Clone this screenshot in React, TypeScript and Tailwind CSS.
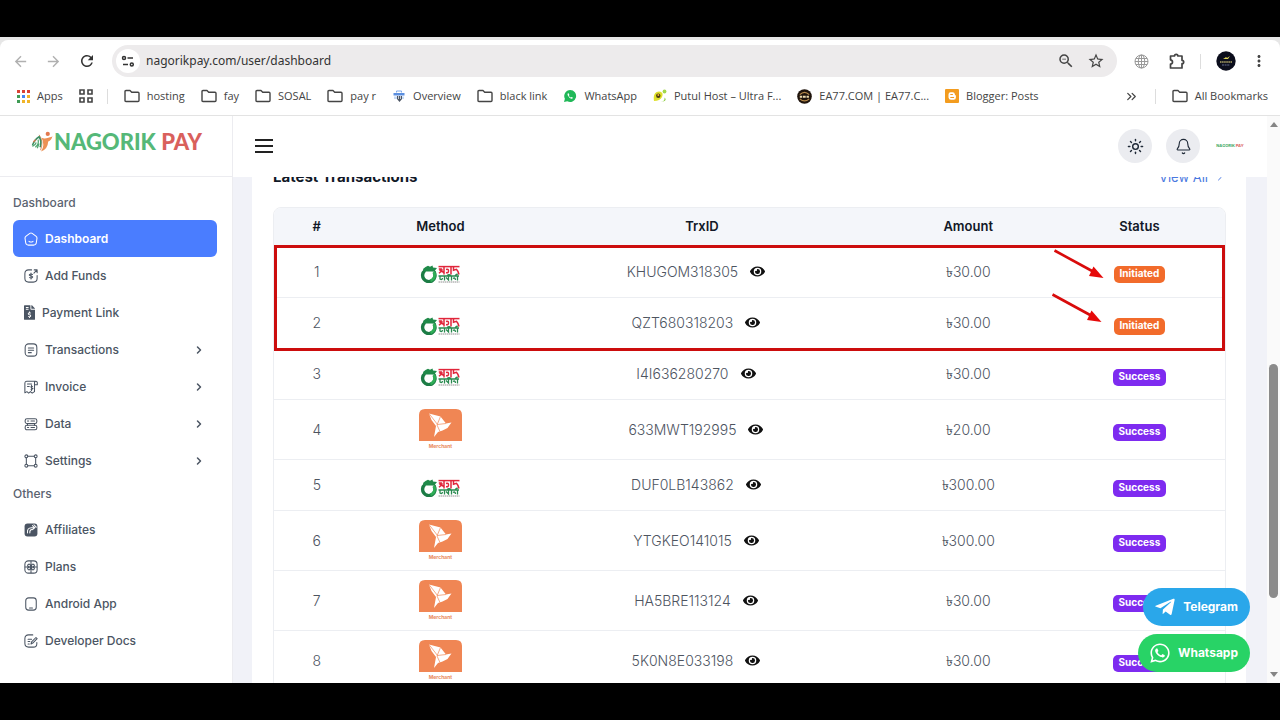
import type { ReactNode } from 'react';
import { Bell, ChevronRight, ChevronsRight, Sun } from 'lucide-react';
import { FaEye, FaFileInvoiceDollar, FaTelegramPlane, FaWhatsapp } from 'react-icons/fa';
import { MdArrowBack, MdArrowForward, MdMoreVert, MdRefresh, MdStarBorder, MdZoomOut } from 'react-icons/md';

interface Transaction {
  id: number;
  method: 'nagad' | 'bkash';
  trx: string;
  amount: string;
  status: 'Initiated' | 'Success';
}

const transactions: Transaction[] = [
  { id: 1, method: 'nagad', trx: 'KHUGOM318305', amount: '৳30.00', status: 'Initiated' },
  { id: 2, method: 'nagad', trx: 'QZT680318203', amount: '৳30.00', status: 'Initiated' },
  { id: 3, method: 'nagad', trx: 'I4I636280270', amount: '৳30.00', status: 'Success' },
  { id: 4, method: 'bkash', trx: '633MWT192995', amount: '৳20.00', status: 'Success' },
  { id: 5, method: 'nagad', trx: 'DUF0LB143862', amount: '৳300.00', status: 'Success' },
  { id: 6, method: 'bkash', trx: 'YTGKEO141015', amount: '৳300.00', status: 'Success' },
  { id: 7, method: 'bkash', trx: 'HA5BRE113124', amount: '৳30.00', status: 'Success' },
  { id: 8, method: 'bkash', trx: '5K0N8E033198', amount: '৳30.00', status: 'Success' },
];

/* ---------- icons ---------- */

function LineIcon({ children }: { children: ReactNode }) {
  return (
    <svg
      viewBox="0 0 24 24"
      className="size-[14px] shrink-0"
      fill="none"
      stroke="currentColor"
      strokeWidth="1.8"
      strokeLinecap="round"
      strokeLinejoin="round"
    >
      {children}
    </svg>
  );
}

const HomeIcon = () => (
  <LineIcon>
    <path d="M10 2.3 3.6 7Q1.4 8.6 1.8 11.2l1.1 7.3Q3.5 22.5 7.5 22.5h9q4 0 4.6-4l1.1-7.3Q22.6 8.6 20.4 7L14 2.3q-2-1.3-4 0Z" />
    <path d="M8.5 16q3.5 2.5 7 0" />
  </LineIcon>
);

const FundsIcon = () => (
  <LineIcon>
    <path d="M13 1.5H8Q1.500 1.500 1.500 8v8q0 6.500 6.500 6.500h8q6.500 0 6.500-6.500v-5" />
    <path d="m17 7 5-5M17.500 1.500h5v5" />
    <path d="M14.500 9.500Q12 7.800 9.800 9.300T12 12t2.200 2.700-4.700.1M12 7v10" />
  </LineIcon>
);

const TransactionsIcon = () => (
  <LineIcon>
    <rect x="2" y="1.5" width="20" height="21" rx="6" />
    <path d="M7.5 8.500h9M7.500 12.500h9M7.500 16.500h5" />
  </LineIcon>
);

const InvoiceIcon = () => (
  <LineIcon>
    <path d="M19 2H5Q1.500 2 1.500 6v16l3.500-2 3 2.500 3-2.500 3 2.500 4-2.500V5q0-3 2.300-3t2.500 2.500V8H18" />
    <path d="M6 7h7M6 11h3M14.500 11Q12 10 12 12t2.500 2-2.500 2.500M13 9v9" />
  </LineIcon>
);

const DataIcon = () => (
  <LineIcon>
    <rect x="2" y="3" width="20" height="8" rx="3" />
    <rect x="2" y="14" width="20" height="8" rx="3" />
    <path d="M6 7h2M12 7h6M6 18h2M12 18h6M6 11v3M18 11v3" />
  </LineIcon>
);

const SettingsIcon = () => (
  <LineIcon>
    <circle cx="4" cy="4" r="2.500" />
    <circle cx="20" cy="4" r="2.500" />
    <circle cx="4" cy="20" r="2.500" />
    <circle cx="20" cy="20" r="2.500" />
    <path d="M6.500 4h11M6.500 20h11M4 6.500v11M20 6.500v11" />
  </LineIcon>
);

const AffiliatesIcon = () => (
  <svg viewBox="0 0 24 24" className="size-[14px] shrink-0">
    <rect x="1" y="1" width="22" height="22" rx="5" fill="currentColor" />
    <g fill="none" stroke="#fff" strokeWidth="1.8" strokeLinecap="round">
      <path d="M6 17q-1-9 7-9h5M14.500 4.500l4 3.500-4 3.500M10 17q-.5-5 3-6M17 3l4 4" />
    </g>
  </svg>
);

const PlansIcon = () => (
  <LineIcon>
    <rect x="1.500" y="1.500" width="21" height="21" rx="6" />
    <path d="M12 2v20M2 12h20M7 8q3-3 5 4 2-7 5-4t-5 4q8 1 5 4t-5-4q-2 7-5 4t5-4Q4 11 7 8Z" />
  </LineIcon>
);

const PhoneIcon = () => (
  <LineIcon>
    <rect x="3" y="1.500" width="18" height="21" rx="5" />
    <path d="M9.500 19h5" />
  </LineIcon>
);

const DocsIcon = () => (
  <LineIcon>
    <path d="M15 1.500H8Q1.500 1.500 1.500 8v8q0 6.500 6.500 6.500h8q6 0 6-6v-2" />
    <path d="M7 9h6M7 13h3M12 17l1-3.500L20.500 6l2 2-7.500 7.500-3 1.500ZM7 17h2" />
  </LineIcon>
);

const TuneIcon = () => (
  <svg viewBox="0 0 14 14" className="size-3.5" fill="none" stroke="#333" strokeWidth="1.500">
    <circle cx="3" cy="4" r="1.500" />
    <path d="M6.500 4H12M2 10.500h5" />
    <circle cx="10.800" cy="10.500" r="1.500" />
  </svg>
);

const NetworkIcon = () => (
  <svg viewBox="0 0 15 15" className="size-[15px]" fill="none" stroke="currentColor">
    <circle cx="7.500" cy="7.500" r="6.500" />
    <ellipse cx="7.500" cy="7.500" rx="3.200" ry="6.500" />
    <path d="M7.500 1v13M1 7.500h13M2 4.500h11M2 10.500h11" />
  </svg>
);

const ExtensionsIcon = () => (
  <svg viewBox="0 0 18 18" className="size-[18px]" fill="none" stroke="currentColor" strokeWidth="1.700" strokeLinejoin="round">
    <path d="M2.500 4h4a1.700 1.700 0 0 1 3.400 0H14v4.300a1.700 1.700 0 0 1 0 3.400V16H2.500v-3.800q2-.3 2-2.200t-2-2.200Z" />
  </svg>
);

const AppsIcon = () => (
  <svg viewBox="0 0 13 13" className="size-[13px]">
    <path fill="#d94335" d="M0 0h3v3H0zM5 0h3v3H5zM10 0h3v3h-3z" />
    <path fill="#3f9b54" d="M0 5h3v3H0zM0 10h3v3H0z" />
    <path fill="#4285f4" d="M5 5h3v3H5z" />
    <path fill="#f0b429" d="M10 5h3v3h-3zM5 10h3v3H5zM10 10h3v3h-3z" />
  </svg>
);

const TabGroupsIcon = () => (
  <svg viewBox="0 0 14 14" className="size-3.5" fill="none" stroke="currentColor" strokeWidth="1.600">
    <path d="M1 1h4v4H1zM9 1h4v4H9zM1 9h4v4H1zM9 9h4v4H9z" />
  </svg>
);

const FolderIcon = () => (
  <svg viewBox="0 0 16 14" className="h-3.5 w-4" fill="none" stroke="currentColor" strokeWidth="1.400" strokeLinejoin="round">
    <path d="M1 11.500v-9q0-1 1-1h4l1.700 1.700H14q1 0 1 1v7.300q0 1-1 1H2q-1 0-1-1Z" />
  </svg>
);

const OverviewIcon = () => (
  <svg viewBox="0 0 14 14" className="size-3.5">
    <path d="M4.500 3.500V2h5v1.500" fill="none" stroke="#7da7e8" />
    <path d="M1.500 4h11v2.500h-11z" fill="#5b8fe0" />
    <path d="M2 7.500h10V10H2z" fill="#c6daf6" />
    <path d="M5 7h5v3l-2.500 3L5 10z" fill="#4b5563" />
    <path d="M6.500 7v3M8.500 7v3" stroke="#fff" strokeWidth=".7" />
  </svg>
);

const WhatsAppBadge = () => (
  <svg viewBox="0 0 14 14" className="size-3.5">
    <path d="M7.200 1A6 6 0 1 1 4.300 12.300L1 13l.9-3.200A6 6 0 0 1 7.200 1Z" fill="#20b858" />
    <path d="M5 4.200q-.8.700-.3 2Q6 9 8.500 9.700q1 .1 1.500-.9L8.500 8l-.7.600Q6.500 8 5.900 6.700L6.400 6 5.800 4.400Z" fill="#fff" />
  </svg>
);

const PutulIcon = () => (
  <svg viewBox="0 0 14 14" className="size-3.5">
    <circle cx="11.500" cy="2.500" r="1.900" fill="#a3d84a" />
    <path d="M1 12Q-.5 3 6 2.500q5 .5 3 5.500-2 4-8 4Z" fill="#dfe02c" />
    <circle cx="5.300" cy="6.800" r="2.200" fill="#4a3a10" />
    <circle cx="5.300" cy="6" r="1" fill="#f4b52b" />
    <path d="M8 13q4-.5 3.500-4.500Q15 12 8 13Z" fill="#8acb3c" />
  </svg>
);

const CasinoIcon = () => (
  <svg viewBox="0 0 16 16" className="size-[15px]">
    <circle cx="8" cy="8" r="7.800" fill="#1f140c" />
    <path d="M3 6q5-5 10 0M3 10.500q5 4.500 10 0" fill="none" stroke="#b88a4a" strokeWidth="1.300" />
    <path d="M3 8.300h2.500M6.300 8.300h3M10.200 8.300h2.500" stroke="#f0dcae" strokeWidth="2" />
  </svg>
);

const BloggerIcon = () => (
  <svg viewBox="0 0 14 14" className="size-3.5">
    <rect width="14" height="14" rx="1" fill="#f39c1f" />
    <path
      d="M6 3.200h1.800A2 2 0 0 1 9.800 5q0 1 .7 1.200.4.100.4.600v1.700a2.300 2.300 0 0 1-2.300 2.300H6a2.500 2.500 0 0 1-2.500-2.300v-3A2.300 2.300 0 0 1 6 3.200Z"
      fill="#fff"
    />
    <path d="M5.700 5.500h1.800M5.700 8.500h3" stroke="#f39c1f" strokeLinecap="round" />
  </svg>
);

const ProfileIcon = () => (
  <svg viewBox="0 0 20 20" className="size-5">
    <circle cx="10" cy="10" r="9.700" fill="#0b0d1c" />
    <path d="M7 8q2-1 3-2l1 1 3-2-2 3H7Z" fill="#e0d558" />
    <path d="M4 11h12" stroke="#b3a96a" strokeWidth="1.500" strokeDasharray="1.500 .6" />
    <path d="M6 14h8" stroke="#666e90" strokeDasharray="2 .6" />
  </svg>
);

function NagadLogo() {
  return (
    <svg viewBox="0 0 40 18" className="inline-block h-[18px] w-10">
      <path d="M5 5.500A6.200 6.200 0 1 0 14 7" fill="none" stroke="#1c7c45" strokeWidth="3.400" />
      <path d="M14 7a6.200 6.200 0 0 1-3.500 8.800" fill="none" stroke="#2fae57" strokeWidth="2.800" />
      <path d="m3 4 2.500-2L8 .8l2 1L12.500.500l.5 2 4 .5-2 2.500 1 1.500-4-.5L8 6.500 4 6.500Z" fill="#1f8a49" />
      <g fill="none" stroke="#e0263b" strokeWidth="1.500">
        <path d="M18.500 1.600H39.500" />
        <path d="M24 1.600v7.900M31 1.600v7.900M18.800 4h2.700q1.200 1-.5 2.500L19 8.300M24 7.500 19.500 5M26 7.500q2.500.8 2.500-1.500T26 4.500M33.500 1.600v3.700l3-1q1.500 1.200 2.500 5.200" />
      </g>
      <g fill="none" stroke="#2a8a50" strokeWidth="1.300">
        <path d="M18.500 11H39M20 11v3q2 1.500 2.500-1M24.500 11v4.500M26 12.500l2.500 2.500v-4M31.500 11v4.500M33 13.500q2-1.500 2.500 1.500M37.500 11v4.500M27 11q2-2.500 4 0M35 11q1.500-2.500 3-1.500" />
      </g>
      <path d="M18.500 17H39.500" stroke="#777" strokeWidth=".8" strokeDasharray="1.500 .5" />
    </svg>
  );
}

function BkashLogo() {
  return (
    <span className="inline-flex w-[43px] flex-col items-center gap-0.5">
      <svg viewBox="0 0 43 32" className="h-8 w-[43px]">
        <path d="M0 32V6q0-6 6-6h31q6 0 6 6v26Z" fill="#f08654" />
        <path d="m10 4.500 11.500 3 5.500 7 5.500-1-1.500 2-2.500 3.500-5 2.500-4.500 1.500-4 5 2-11-4.500-6Z" fill="#fff" />
        <path d="m10 4.500 8.500 11 8.500-1M18 16l3 6.500M21.500 7.500 18 16" fill="none" stroke="#f08654" strokeWidth=".7" />
      </svg>
      <span className="text-[5px] leading-[6px] font-bold text-[#e98a60]">Merchant</span>
    </span>
  );
}

function BrandMark() {
  return (
    <svg viewBox="0 0 24 24" className="h-[23px] w-6">
      <circle cx="18" cy="3" r="2.200" fill="#e2794f" />
      <path d="M11.500 7q3 1.500 7 0 4-.5 4.500-2-1 5-4.500 6-.5 8-7.500 10.500 4.500-7 .5-14.500Z" fill="#ec9155" />
      <path d="M9 4q5 7 1.500 16" fill="none" stroke="#d89064" strokeWidth="1" />
      <path d="M2 15q2-6 7-9 3 5 1 11" fill="none" stroke="#3c8d62" strokeWidth="1.600" />
      <path d="M2 16q3-1 4-4M5 17q4-3 3-8M7 18l2-5" fill="none" stroke="#52a873" strokeWidth="1.300" />
      <path d="M3 11.500 5.500 9" stroke="#e2794f" strokeWidth="1.200" />
    </svg>
  );
}

/* ---------- browser chrome ---------- */

const bookmarks: { label: string; icon: ReactNode }[] = [
  { label: 'hosting', icon: <FolderIcon /> },
  { label: 'fay', icon: <FolderIcon /> },
  { label: 'SOSAL', icon: <FolderIcon /> },
  { label: 'pay r', icon: <FolderIcon /> },
  { label: 'Overview', icon: <OverviewIcon /> },
  { label: 'black link', icon: <FolderIcon /> },
  { label: 'WhatsApp', icon: <WhatsAppBadge /> },
  { label: 'Putul Host – Ultra F...', icon: <PutulIcon /> },
  { label: 'EA77.COM | EA77.C...', icon: <CasinoIcon /> },
  { label: 'Blogger: Posts', icon: <BloggerIcon /> },
];

function Bookmark({ label, icon }: { label: string; icon: ReactNode }) {
  return (
    <a href="#" className="flex items-center gap-[7px] whitespace-nowrap">
      {icon}
      {label}
    </a>
  );
}

function BrowserBar() {
  return (
    <header className="shrink-0 border-b border-[#e3e3e3] bg-[#e6e6e6] pt-[3px] font-['Open_Sans','Noto_Sans',sans-serif] text-[#444]">
      <div className="rounded-t-lg bg-white">
        <div className="flex h-[42px] items-center pr-3 pl-3">
          <button aria-label="Back" className="text-[#b0b0b0]">
            <MdArrowBack className="size-[17px]" />
          </button>
          <button aria-label="Forward" className="ml-4 text-[#b0b0b0]">
            <MdArrowForward className="size-[17px]" />
          </button>
          <button aria-label="Reload" className="ml-4 text-[#333]">
            <MdRefresh className="size-[18px]" />
          </button>
          <div className="ml-4 flex h-8 flex-1 items-center rounded-full bg-[#edebec] pr-3 pl-1">
            <button aria-label="Site information" className="flex size-6 items-center justify-center rounded-full bg-white">
              <TuneIcon />
            </button>
            <input
              aria-label="Address"
              defaultValue="nagorikpay.com/user/dashboard"
              className="ml-1.5 min-w-0 flex-1 bg-transparent font-['Noto_Sans',sans-serif] text-[12px] text-[#333] outline-none"
            />
            <button aria-label="Zoom" className="text-[#444]">
              <MdZoomOut className="size-[18px]" />
            </button>
            <button aria-label="Bookmark this page" className="ml-3 text-[#444]">
              <MdStarBorder className="size-[18px]" />
            </button>
          </div>
          <button aria-label="Language" className="ml-[17px] text-[#999]">
            <NetworkIcon />
          </button>
          <button aria-label="Extensions" className="ml-[19px] text-[#444]">
            <ExtensionsIcon />
          </button>
          <span className="ml-3.5 h-[15px] w-px bg-[#ddd]" />
          <button aria-label="Profile" className="ml-[15px]">
            <ProfileIcon />
          </button>
          <button aria-label="Menu" className="ml-3.5 text-[#444]">
            <MdMoreVert className="size-[18px]" />
          </button>
        </div>
        <nav className="flex h-[33px] items-center gap-4 pr-3 pb-[5px] pl-[17px] text-[11px]">
          <Bookmark label="Apps" icon={<AppsIcon />} />
          <TabGroupsIcon />
          <span className="-ml-0.5 h-[15px] w-px bg-[#ddd]" />
          {bookmarks.map((b) => (
            <Bookmark key={b.label} label={b.label} icon={b.icon} />
          ))}
          <button aria-label="More bookmarks" className="ml-auto">
            <ChevronsRight className="size-[15px]" />
          </button>
          <span className="h-[15px] w-px bg-[#ddd]" />
          <Bookmark label="All Bookmarks" icon={<FolderIcon />} />
        </nav>
      </div>
    </header>
  );
}

/* ---------- sidebar ---------- */

interface NavItem {
  label: string;
  icon: ReactNode;
  active?: boolean;
  children?: boolean;
}

const mainNav: NavItem[] = [
  { label: 'Dashboard', icon: <HomeIcon />, active: true },
  { label: 'Add Funds', icon: <FundsIcon /> },
  { label: 'Payment Link', icon: <FaFileInvoiceDollar className="h-[15px] w-[11px]" /> },
  { label: 'Transactions', icon: <TransactionsIcon />, children: true },
  { label: 'Invoice', icon: <InvoiceIcon />, children: true },
  { label: 'Data', icon: <DataIcon />, children: true },
  { label: 'Settings', icon: <SettingsIcon />, children: true },
];

const otherNav: NavItem[] = [
  { label: 'Affiliates', icon: <AffiliatesIcon /> },
  { label: 'Plans', icon: <PlansIcon /> },
  { label: 'Android App', icon: <PhoneIcon /> },
  { label: 'Developer Docs', icon: <DocsIcon /> },
];

function NavLink({ item }: { item: NavItem }) {
  return (
    <li>
      <a
        href="#"
        className={`flex h-[37px] items-center gap-[7px] rounded-md pr-3 pl-[11px] text-[12px] ${
          item.active ? 'bg-[#4a7dff] font-semibold text-white' : 'font-medium text-[#4b5563]'
        }`}
      >
        {item.icon}
        {item.label}
        {item.children && <ChevronRight className="ml-auto size-3" strokeWidth={3} />}
      </a>
    </li>
  );
}

function Sidebar() {
  return (
    <aside className="w-[233px] shrink-0 border-r border-[#ececf0] bg-white">
      <a href="#" className="flex h-[61px] items-center justify-center border-b border-[#ececf0] pb-2">
        <BrandMark />
        <span className="font-['Lato',sans-serif] text-[22px] leading-6 font-black whitespace-nowrap text-[#55b878]">
          NAGORIK <span className="text-[#d9605c]">PAY</span>
        </span>
      </a>
      <nav className="pt-4 pr-[15px] pl-[13px]">
        <h2 className="pb-[7px] text-[12px] leading-5 font-medium text-[#5b6370]">Dashboard</h2>
        <ul>
          {mainNav.map((item) => (
            <NavLink key={item.label} item={item} />
          ))}
        </ul>
        <h2 className="pt-[5px] pb-[7px] text-[12px] leading-5 font-medium text-[#5b6370]">Others</h2>
        <ul>
          {otherNav.map((item) => (
            <NavLink key={item.label} item={item} />
          ))}
        </ul>
      </nav>
    </aside>
  );
}

/* ---------- main ---------- */

function TopBar() {
  return (
    <div className="flex h-[61px] shrink-0 items-center bg-white px-[22px] pb-px">
      <button aria-label="Toggle menu" className="flex w-[18px] flex-col gap-1">
        <span className="h-0.5 bg-[#222]" />
        <span className="h-0.5 bg-[#222]" />
        <span className="h-0.5 bg-[#222]" />
      </button>
      <button
        aria-label="Theme"
        className="ml-auto flex size-[34px] items-center justify-center rounded-full bg-[#ebecf0] text-[#1f2937]"
      >
        <Sun className="size-[17px]" strokeWidth={2} />
      </button>
      <button
        aria-label="Notifications"
        className="ml-3.5 flex size-[34px] items-center justify-center rounded-full bg-[#ebecf0] text-[#1f2937]"
      >
        <Bell className="size-[17px]" strokeWidth={1.6} />
      </button>
      <button className="ml-[15px] w-[30px] text-[4px] leading-none font-bold whitespace-nowrap text-[#3aa862]">
        NAGORIK <span className="text-[#d9605c]">PAY</span>
      </button>
    </div>
  );
}

function StatusBadge({ status }: { status: Transaction['status'] }) {
  return (
    <span
      className={`inline-block rounded-[5px] px-1.5 pb-[3px] align-middle text-[10px] leading-[14px] font-bold text-white ${
        status === 'Initiated' ? 'bg-[#f26b2b]' : 'bg-[#7e2bf0]'
      }`}
    >
      {status}
    </span>
  );
}

function Arrow() {
  return (
    <svg viewBox="0 0 52 30" className="h-[30px] w-[52px]">
      <path d="M1.500 1.500 40 22.500" stroke="#d90b0b" strokeWidth="2.600" />
      <path d="m40.500 17.500 10 11.500-14.500-2Z" fill="#e60a0a" />
    </svg>
  );
}

function TransactionsTable() {
  return (
    <div className="relative">
      <div className="overflow-hidden rounded-lg border border-[#eceef2]">
        <table className="w-full table-fixed text-center text-[14px] text-[#4d545f]">
          <thead>
            <tr className="h-[38px] bg-[#f4f6fa] text-[13px] text-[#111827]">
              <th className="w-[9%] font-semibold">#</th>
              <th className="w-[17%] font-semibold">Method</th>
              <th className="w-[38%] font-semibold">TrxID</th>
              <th className="w-[18%] font-semibold">Amount</th>
              <th className="w-[18%] font-semibold">Status</th>
            </tr>
          </thead>
          <tbody className="font-light">
            {transactions.map((t) => (
              <tr
                key={t.id}
                className={`border-b border-[#eceef2] ${t.method === 'bkash' ? 'h-[60px]' : 'h-[51px]'}`}
              >
                <td>{t.id}</td>
                <td className={t.method === 'bkash' ? 'leading-none' : 'pt-1.5 leading-none'}>
                  {t.method === 'bkash' ? <BkashLogo /> : <NagadLogo />}
                </td>
                <td className="pr-3">
                  <span className="inline-flex items-center gap-3">
                    {t.trx}
                    <button aria-label={`View ${t.trx}`} className="text-[#111]">
                      <FaEye className="size-[15px]" />
                    </button>
                  </span>
                </td>
                <td>{t.amount}</td>
                <td className="pt-1">
                  <StatusBadge status={t.status} />
                </td>
              </tr>
            ))}
          </tbody>
        </table>
      </div>
      {/* highlight around the pending rows */}
      <div className="pointer-events-none absolute inset-x-px top-[38px] h-[106px] border-3 border-[#cc0d0d]">
        <div className="absolute top-px right-[117px]">
          <Arrow />
        </div>
        <div className="absolute top-[45px] right-[119px]">
          <Arrow />
        </div>
      </div>
    </div>
  );
}

function ScrollBar() {
  return (
    <div aria-hidden="true" className="flex w-[13px] shrink-0 flex-col items-center bg-[#fafafa] py-1.5">
      <svg viewBox="0 0 8 5" className="h-[5px] w-2">
        <path d="M4 0 8 5H0Z" fill="#858585" />
      </svg>
      <div className="grow-[237]" />
      <div className="w-[9px] grow-[234] rounded-full bg-[#8b8b8b]" />
      <div className="grow-[74]" />
      <svg viewBox="0 0 8 5" className="h-[5px] w-2">
        <path d="M0 0h8L4 5Z" fill="#858585" />
      </svg>
    </div>
  );
}

export default function App() {
  return (
    <div className="flex h-screen flex-col bg-black py-[37px]">
      <BrowserBar />
      <div className="relative flex min-h-0 flex-1 overflow-hidden bg-white font-['Inter','Liberation_Sans',sans-serif]">
        <Sidebar />
        <div className="flex min-w-0 flex-1 flex-col">
          <TopBar />
          <main className="min-h-0 flex-1 overflow-hidden bg-[#f1f2f8] pr-[21px] pl-[19px]">
            <section className="bg-white pr-5 pl-[21px]">
              <div className="-mt-2.5 flex items-center justify-between pb-5 leading-5">
                <h1 className="text-[15px] font-bold text-[#111827]">Latest Transactions</h1>
                <a href="#" className="flex items-center gap-1.5 text-[13px] text-[#4a78e0]">
                  View All
                  <ChevronRight className="size-3" />
                </a>
              </div>
              <TransactionsTable />
            </section>
          </main>
        </div>
        <ScrollBar />
        <div className="absolute right-[30px] bottom-[11px] flex flex-col items-end gap-2 text-[12px] font-bold text-white">
          <a href="#" className="flex h-[38px] items-center gap-[7px] rounded-full bg-[#2aa7ea] pr-3 pl-[11px]">
            <FaTelegramPlane className="size-[22px]" />
            Telegram
          </a>
          <a href="#" className="flex h-[38px] items-center gap-[7px] rounded-full bg-[#28d366] pr-3 pl-[11px]">
            <FaWhatsapp className="size-[22px]" />
            Whatsapp
          </a>
        </div>
      </div>
    </div>
  );
}
